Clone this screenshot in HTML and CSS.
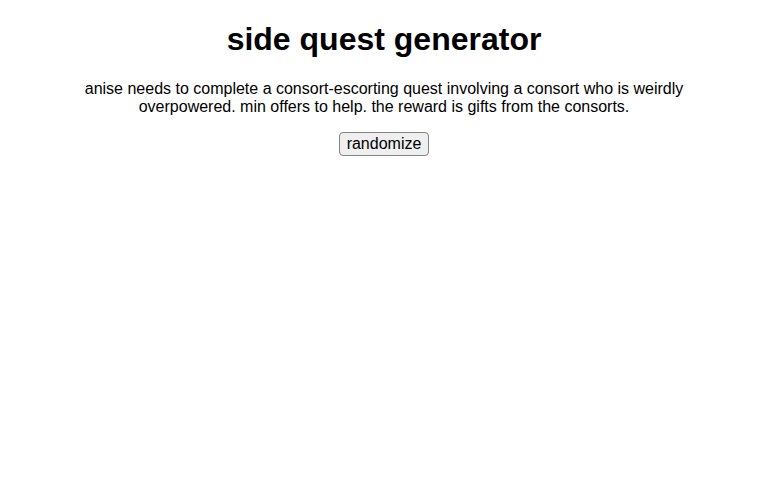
FILE: index.html
```html
<!DOCTYPE html>
<html lang="en">
<head>
  <meta charset="UTF-8">
  <meta name="viewport" content="width=device-width, initial-scale=1.0">
  <title>side quest generator</title>
  <link rel="stylesheet" href="styles.css">
</head>
<body>
  <h1>side quest generator</h1>
  <p id="quest" class="quest">anise needs to complete a consort-escorting quest involving a consort who is weirdly overpowered. min offers to help. the reward is gifts from the consorts.</p>
  <button id="randomize">randomize</button>
</body>
</html>
```
FILE: styles.css
```css
body {
  margin: 0 8px;
  font-family: 'Liberation Sans', Arial, sans-serif;
  text-align: center;
  color: #000;
  background: #fff;
}

h1 {
  font-size: 2em;
}

.quest {
  max-width: 600px;
  margin-left: auto;
  margin-right: auto;
}

button {
  font-family: inherit;
  font-size: 16px;
  padding: 2px 7px;
  color: #000;
  background: #efefef;
  border: 1px solid #858585;
  border-radius: 4px;
}
```
